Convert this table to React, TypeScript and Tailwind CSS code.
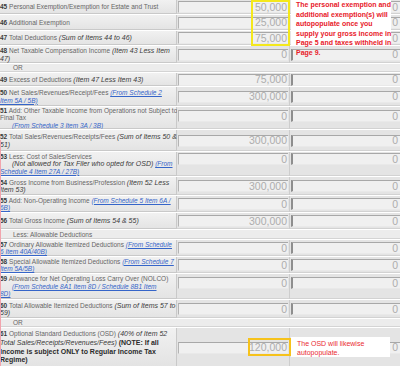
import type { ReactNode } from "react";

const sans = "font-['Liberation_Sans',Arial,sans-serif]";

function Num({ children }: { children: ReactNode }) {
  return <b className="font-bold text-[#3a3a3a]">{children}</b>;
}

function Em({ children }: { children: ReactNode }) {
  return <i className="text-[7px] text-[#3a3a3a]">{children}</i>;
}

function Lnk({ children }: { children: ReactNode }) {
  return <span className="italic text-[#3565c9] underline">{children}</span>;
}

function Indent() {
  return <span className="inline-block w-[12px]" />;
}

function Field({ value, second }: { value: string; second?: boolean }) {
  return (
    <div
      className={
        second
          ? "flex h-[12px] flex-1 items-center justify-end border-t border-l-2 border-b border-t-[#a8a8a8] border-l-[#8e8e8e] border-b-[#e9e9e9] bg-[#f0f0f0] pr-[2px] text-[10.5px] leading-none text-[#adadad]"
          : "flex h-[12px] flex-1 items-center justify-end border-t border-l border-b border-t-[#a8a8a8] border-l-[#b4b4b4] border-b-[#e9e9e9] bg-[#f0f0f0] pr-[1px] text-[10.5px] leading-none text-[#adadad]"
      }
    >
      {value}
    </div>
  );
}

function Item({
  h,
  a,
  b = "0",
  align = "items-center",
  lh = "leading-[7.5px]",
  children,
}: {
  h: string;
  a: string;
  b?: string;
  align?: string;
  lh?: string;
  children: ReactNode;
}) {
  return (
    <div className={`grid grid-cols-[177px_113px_110px] border-b border-white ${h}`}>
      <div
        className={`flex items-center overflow-hidden whitespace-nowrap bg-linear-to-b from-[#f1f1f1] to-[#e3e3e3] shadow-[inset_-1px_-1px_0_#c9c9c9] ${lh}`}
      >
        <div>{children}</div>
      </div>
      <div className={`flex ${align} border-r border-[#cdcdcd] bg-[#e4e4e4] pl-px pr-px shadow-[inset_0_-1px_0_#d2d2d2]`}>
        <Field value={a} />
      </div>
      <div className={`flex ${align} bg-[#e4e4e4] pl-px shadow-[inset_0_-1px_0_#d2d2d2]`}>
        <Field value={b} second />
      </div>
    </div>
  );
}

function Divider({ h, children }: { h: string; children: ReactNode }) {
  return (
    <div className={`flex items-center border-b border-white bg-[#ececec] pl-[13px] shadow-[inset_0_-1px_0_#d4d4d4] ${h}`}>
      {children}
    </div>
  );
}

export default function App() {
  return (
    <div className={`relative h-[366px] w-[400px] overflow-hidden bg-white text-[6.5px] text-[#666] ${sans}`}>
      <Item h="h-[15px]" a="50,000">
        <Num>45</Num> Personal Exemption/Exemption for Estate and Trust
      </Item>
      <Item h="h-[16px]" a="25,000">
        <Num>46</Num> Additional Exemption
      </Item>
      <Item h="h-[15px]" a="75,000">
        <Num>47</Num> Total Deductions <Em>(Sum of Items 44 to 46)</Em>
      </Item>
      <Item h="h-[18px]" a="0">
        <Num>48</Num> Net Taxable Compensation Income <Em>(Item 43 Less Item<br />47)</Em>
      </Item>
      <Divider h="h-[9px]">OR</Divider>
      <Item h="h-[14px]" a="75,000">
        <Num>49</Num> Excess of Deductions <Em>(Item 47 Less Item 43)</Em>
      </Item>
      <Item h="h-[20px]" a="300,000">
        <Num>50</Num> Net Sales/Revenues/Receipt/Fees <Lnk>(From Schedule 2<br />Item 5A / 5B)</Lnk>
      </Item>
      <Item h="h-[23px]" a="0" align="items-start pt-[3px]">
        <Num>51</Num> Add: Other Taxable Income from Operations not Subject to
        <br />
        Final Tax
        <br />
        <Indent />
        <Lnk>(From Schedule 3 Item 3A / 3B)</Lnk>
      </Item>
      <Item h="h-[22px]" a="300,000">
        <Num>52</Num> Total Sales/Revenues/Receipts/Fees <Em>(Sum of Items 50 &amp;<br />51)</Em>
      </Item>
      <Item h="h-[25px]" a="0" align="items-start pt-[1px]">
        <Num>53</Num> Less: Cost of Sales/Services
        <br />
        <Indent />
        <Em>(Not allowed for Tax Filer who opted for OSD)</Em> <Lnk>(From<br />Schedule 4 Item 27A / 27B)</Lnk>
      </Item>
      <Item h="h-[19px]" a="300,000">
        <Num>54</Num> Gross Income from Business/Profession <Em>(Item 52 Less<br />Item 53)</Em>
      </Item>
      <Item h="h-[17px]" a="0">
        <Num>55</Num> Add: Non-Operating Income <Lnk>(From Schedule 5 Item 6A /<br />6B)</Lnk>
      </Item>
      <Item h="h-[17px]" a="300,000">
        <Num>56</Num> Total Gross Income <Em>(Sum of Items 54 &amp; 55)</Em>
      </Item>
      <Divider h="h-[10px]">Less: Allowable Deductions</Divider>
      <Item h="h-[17px]" a="0">
        <Num>57</Num> Ordinary Allowable Itemized Deductions <Lnk>(From Schedule<br />6 Item 40A/40B)</Lnk>
      </Item>
      <Item h="h-[17px]" a="0">
        <Num>58</Num> Special Allowable Itemized Deductions <Lnk>(From Schedule 7<br />Item 5A/5B)</Lnk>
      </Item>
      <Item h="h-[26px]" a="0" align="items-start pt-[3px]">
        <Num>59</Num> Allowance for Net Operating Loss Carry Over (NOLCO)
        <br />
        <Indent />
        <Lnk>(From Schedule 8A1 Item 8D / Schedule 8B1 Item<br />8D)</Lnk>
      </Item>
      <Item h="h-[19px]" a="0">
        <Num>60</Num> Total Allowable Itemized Deductions <Em>(Sum of Items 57 to<br />59)</Em>
      </Item>
      <Divider h="h-[9px]">OR</Divider>
      <Item h="h-[40px]" a="120,000" lh="leading-[8.7px]">
        <Num>61</Num> Optional Standard Deductions (OSD) <Em>(40% of Item 52<br />Total Sales/Receipts/Revenues/Fees)</Em>{" "}
        <b className="text-[7px] font-bold text-[#2a2a2a]">
          (NOTE: If all
          <br />
          Income is subject ONLY to Regular Income Tax
          <br />
          Regime)
        </b>
      </Item>

      {/* annotations drawn over the form */}
      <div className="absolute left-0 top-[140px] bottom-0 w-px bg-[#f2a4ad]" />
      <div className="absolute left-[291px] top-0 h-[46px] w-[100px] bg-white" />
      <div className="absolute left-[251px] top-0 h-[46px] w-[39px] border-2 border-[#f4e81c]" />
      <div className="absolute left-[296px] top-0 whitespace-nowrap text-[7px] font-bold leading-[9.5px] text-[#e8202a]">
        The personal exemption and
        <br />
        additional exemption(s) will
        <br />
        autopopulate once you
        <br />
        supply your gross income in
        <br />
        Page 5 and taxes withheld in
        <br />
        Page 9.
      </div>
      <div className="absolute left-[291px] top-[337px] h-[20px] w-[99px] bg-white" />
      <div className="absolute left-[248px] top-[338px] h-[18px] w-[43px] border-2 border-[#f6c21b]" />
      <div className="absolute left-[297px] top-[339px] whitespace-nowrap text-[7px] leading-[9px] text-[#ea2a33]">
        The OSD will likewise
        <br />
        autopopulate.
      </div>
    </div>
  );
}
